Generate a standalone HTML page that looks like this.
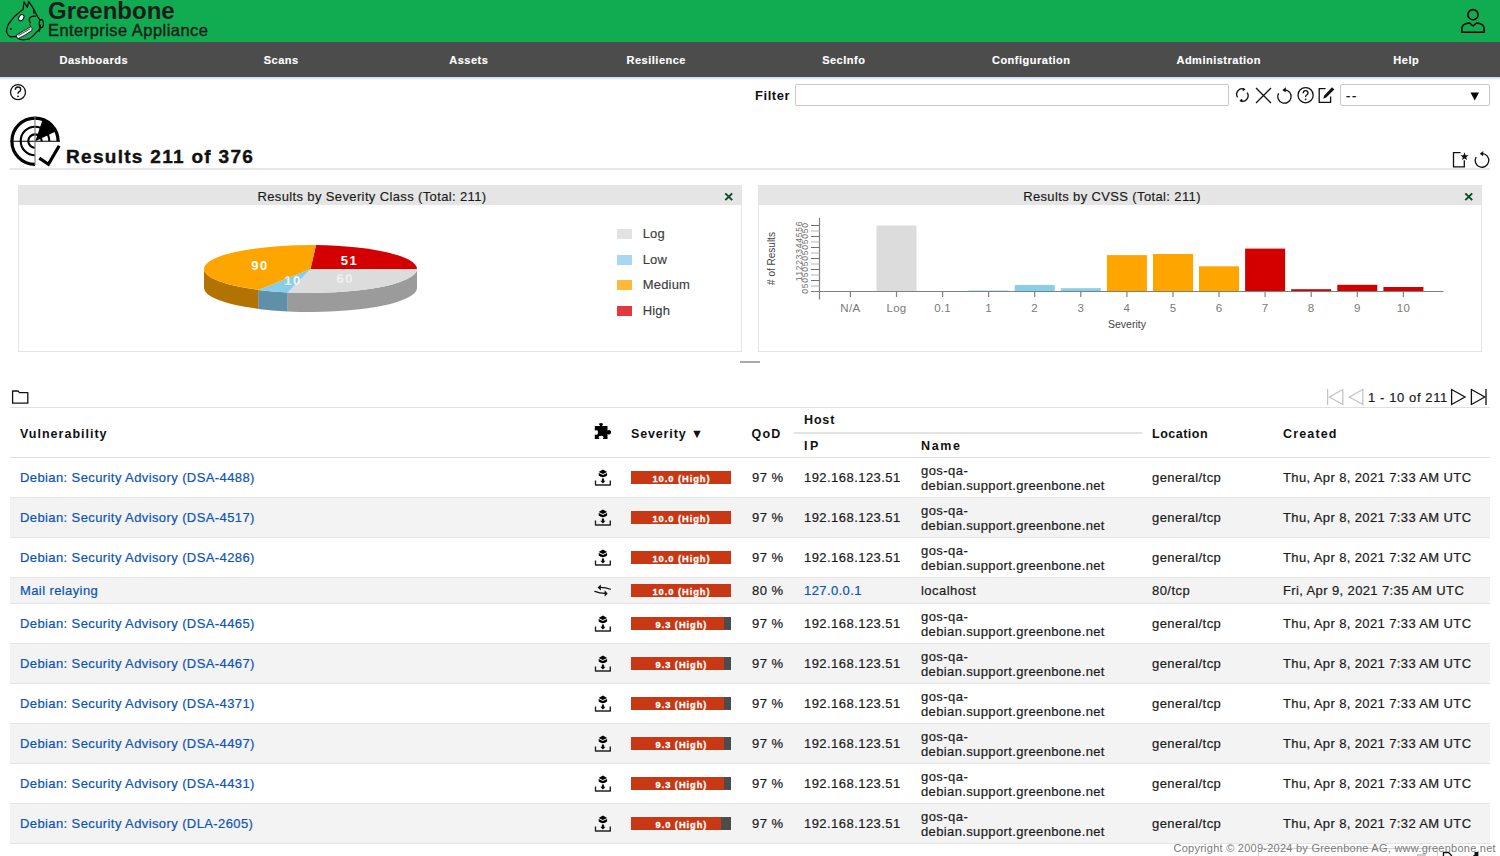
<!DOCTYPE html>
<html><head><meta charset="utf-8">
<style>
*{box-sizing:border-box;margin:0;padding:0}
html,body{width:1500px;height:856px;overflow:hidden;background:#fff;font-family:"Liberation Sans",sans-serif;color:#000}
.a{position:absolute;white-space:nowrap}
svg{position:absolute;overflow:visible}
#hdr{position:absolute;left:0;top:0;width:1500px;height:42px;background:#11ab51}
#nav{position:absolute;left:0;top:42px;width:1500px;height:35px;background:#4c4c4c}
#nav div{position:absolute;top:1px;width:187.5px;height:35px;line-height:35px;text-align:center;color:#fff;font-weight:bold;font-size:11px;letter-spacing:0.5px;-webkit-text-stroke:0.15px #fff}
#blue{position:absolute;left:0;top:77px;width:1500px;height:3px;background:linear-gradient(#cbdaf3,#d6e3f8 40%,#fff)}
.t{font-size:13px;line-height:16px;color:#1a1a1a;letter-spacing:0.45px;-webkit-text-stroke:0.2px currentColor}
.lnk{color:#0a53b7;letter-spacing:0.4px}
.th{font-size:12.5px;line-height:16px;font-weight:bold;color:#111;letter-spacing:0.5px}
.row{position:absolute;left:10px;width:1480px;border-bottom:1px solid #e5e5e5}
.ic{position:absolute}
.sev{position:absolute;left:631px;width:100px;height:13px;background:#4c4c4c}
.sevf{position:absolute;left:0;top:0;height:13px;background:#c83814}
.sev span{position:absolute;left:0.5px;top:1.6px;width:100px;text-align:center;color:#fff;font-weight:bold;font-size:9.3px;line-height:13px;letter-spacing:0.95px;-webkit-text-stroke:0.3px #fff}
.panel{position:absolute;top:185px;width:724px;height:167px;border:1px solid #e5e5e5;border-top:none}
.ptitle{position:absolute;left:-1px;top:0;width:724px;height:20px;background:#e5e5e5}
.ptitle div{position:absolute;left:0;top:0.7px;width:708px;text-align:center;font-size:13px;line-height:21px;color:#1a1a1a;letter-spacing:0.37px;-webkit-text-stroke:0.15px currentColor}
.xclose{position:absolute;top:4px;font-size:14px;font-weight:bold;color:#0b4a28}
.leg{position:absolute;left:598.3px;width:15px;height:10px}
.legt{position:absolute;left:623.7px;font-size:13px;line-height:16px;color:#3c3c3c;letter-spacing:0.2px;-webkit-text-stroke:0.15px currentColor}
.xl{font-family:"Liberation Sans",sans-serif;font-size:11.5px;fill:#7a7a7a;letter-spacing:0.3px}
.yl{font-family:"Liberation Sans",sans-serif;font-size:8.5px;fill:#6e6e6e}
.pl{font-family:"Liberation Sans",sans-serif;font-size:13px;font-weight:bold;letter-spacing:1.6px}
</style></head><body>
<div id="hdr">
  <svg width="48" height="42" viewBox="0 0 48 42" style="left:0;top:0">
    <g fill="none" stroke="#0d0d0d" stroke-width="1.25" stroke-linejoin="round" stroke-linecap="round">
      <path d="M23.1 9.3 L24 1.9 L27.4 7.4 L28.6 1.3 L32 6.4 L34 9.6 L37.3 16.2 L39.2 19 M40.6 27.6 Q39 30 37.3 31.4 Q33 36.5 29.4 38.8 L23 40 L18.7 38.8 L16.2 36.4 L10.8 36.8 Q7.2 35.5 6.4 30.6 Q7.3 26 8.8 23.6 L14.7 16.2 L23.1 9.3"/>
      <path d="M35.4 16.2 Q31 15.6 29.3 18.6 Q29 21 30.4 22.8"/>
      <path d="M33.6 10 L34 13.4"/>
      <ellipse cx="41.3" cy="23.6" rx="2.1" ry="4.1"/>
      <path d="M39.3 31.2 Q40.6 28.5 40.3 25"/>
    </g>
    <path d="M16.5 35.2 Q23.5 31 30.6 26.8 Q32.8 27.8 31.8 30.6 Q25.5 35.2 18.6 38.4 Q15.8 38 16.5 35.2Z" fill="#fff" stroke="#0d0d0d" stroke-width="0.9"/>
    <path d="M18.5 35.6 Q24.5 32 30.2 28.8" stroke="#0d0d0d" stroke-width="0.8" fill="none"/>
    <path d="M29.5 24.2 Q31 26 30.6 26.8" stroke="#0d0d0d" stroke-width="1" fill="none"/>
    <ellipse cx="21.3" cy="17.7" rx="2.3" ry="3.3" transform="rotate(32 21.3 17.7)" fill="#fff" stroke="#0d0d0d" stroke-width="1"/>
    <circle cx="10.8" cy="29" r="1.05" fill="#0d0d0d"/>
    <path d="M39.2 19 L41 20.2" stroke="#0d0d0d" stroke-width="1.2"/>
  </svg>
  <div class="a" style="left:48px;top:-2.6px;font-size:24px;font-weight:bold;color:#1d1d1b">Greenbone</div>
  <div class="a" style="left:48px;top:21.4px;font-size:16.5px;color:#1d1d1b;letter-spacing:0.45px;-webkit-text-stroke:0.4px #1d1d1b">Enterprise Appliance</div>
  <svg width="30" height="30" viewBox="0 0 30 30" style="left:1458px;top:6px">
    <circle cx="15" cy="8.7" r="5.1" fill="none" stroke="#000" stroke-width="1.6"/>
    <path d="M3.8 26.2 V22 Q4.5 17.5 11.5 17 L15 20 L18.5 17 Q25.5 17.5 26.2 22 V26.2 Z" fill="none" stroke="#000" stroke-width="1.6" stroke-linejoin="round"/>
  </svg>
</div>
<div id="nav">
  <div style="left:0">Dashboards</div>
  <div style="left:187.5px">Scans</div>
  <div style="left:375px">Assets</div>
  <div style="left:562.5px">Resilience</div>
  <div style="left:750px">SecInfo</div>
  <div style="left:937.5px">Configuration</div>
  <div style="left:1125px">Administration</div>
  <div style="left:1312.5px">Help</div>
</div>
<div id="blue"></div>

<!-- help icon -->
<svg width="20" height="20" viewBox="0 0 20 20" style="left:8px;top:82px">
  <circle cx="10" cy="10.2" r="7.5" fill="none" stroke="#111" stroke-width="1.3"/>
  <path d="M7.3 7.8 Q7.3 5 10 5 Q12.7 5 12.7 7.6 Q12.7 9.2 10.8 10 Q10 10.4 10 11.8" fill="none" stroke="#111" stroke-width="1.4"/>
  <circle cx="10" cy="14.3" r="0.9" fill="#111"/>
</svg>

<!-- filter -->
<div class="a" style="left:755px;top:87.6px;font-size:13px;font-weight:bold;color:#111;letter-spacing:0.55px">Filter</div>
<div class="a" style="left:795px;top:84px;width:434px;height:22px;border:1px solid #c8c8c8;border-radius:2px"></div>
<svg width="120" height="22" viewBox="0 0 120 22" style="left:1232px;top:84px">
  <g fill="none" stroke="#111" stroke-width="1.3">
    <path d="M5.6 13.3 A5.5 5.5 0 0 1 12.3 5.2"/>
    <path d="M15.2 8.7 A5.5 5.5 0 0 1 8.5 16.8"/>
    <path d="M24 4 L39 19 M39 4 L24 19"/>
    <path d="M52.8 5.8 A6.7 6.7 0 1 1 46.6 9.2"/>
    <circle cx="73.6" cy="11.2" r="7.6"/>
    <path d="M71.2 9.3 Q71.2 6.7 73.6 6.7 Q76 6.7 76 9 Q76 10.5 74.3 11.2 Q73.6 11.6 73.6 13"/>
    <path d="M93.5 4.6 H87.2 V18.4 H98.6 V12.4"/>
  </g>
  <path d="M10.5 3.8 L13.6 5.4 L10.8 7.2Z M10.6 18.3 L7.3 16.6 L10.2 14.8Z" fill="#111"/>
  <path d="M50.3 5.9 L53.9 3.2 L53.7 8.6Z" fill="#111"/>
  <circle cx="73.6" cy="15.3" r="0.9" fill="#111"/>
  <path d="M100 3.2 L102.3 5.5 L94.2 13.6 L91.4 14.7 L92 11.7Z" fill="#111"/>
</svg>
<div class="a" style="left:1340px;top:84px;width:150px;height:22px;border:1px solid #c8c8c8;border-radius:2px"></div>
<div class="a" style="left:1346px;top:88px;font-size:13px;line-height:16px;color:#111;letter-spacing:1.6px;-webkit-text-stroke:0.3px #111">--</div>
<svg width="10" height="9" viewBox="0 0 10 9" style="left:1470px;top:91.5px"><path d="M0.5 0.5 H9 L4.8 8.5Z" fill="#000"/></svg>

<!-- title -->
<svg width="56" height="56" viewBox="0 0 56 56" style="left:7px;top:113px">
  <g fill="none" stroke="#000">
    <path d="M28 51.3 A23.1 23.1 0 1 1 51.1 28.2" stroke-width="3.2"/>
    <path d="M28 42.3 A14.3 14.3 0 1 1 42.3 28.2" stroke-width="2.1"/>
    <path d="M28 34.8 A6.7 6.7 0 1 1 34.7 28.2" stroke-width="2.1"/>
    <path d="M3.5 28.2 H53" stroke-width="1.1"/>
    <path d="M28 3.5 V52" stroke-width="1.1" stroke="#777"/>
    <path d="M32.3 45.2 L41.4 51.3 L52.2 32.8" stroke-width="3.2" stroke-linejoin="miter"/>
  </g>
  <path d="M28.3 28.2 L35.8 6.1 A23.5 23.5 0 0 1 49.2 18.2 Z" fill="#000"/>
</svg>
<div class="a" style="left:66px;top:145.5px;font-size:19px;line-height:22px;font-weight:bold;color:#111;letter-spacing:1.3px;-webkit-text-stroke:0.4px #111">Results 211 of 376</div>
<div class="a" style="left:10px;top:168px;width:1480px;height:2px;background:#e6e6e6"></div>
<svg width="40" height="20" viewBox="0 0 40 20" style="left:1451px;top:149px">
  <path d="M9.6 3.6 H2.5 V17.9 H13.3 V11.2" fill="none" stroke="#111" stroke-width="1.3"/>
  <path d="M13.50 3.30 L14.56 6.14 L17.59 6.27 L15.21 8.16 L16.03 11.08 L13.50 9.40 L10.97 11.08 L11.79 8.16 L9.41 6.27 L12.44 6.14Z" fill="#111"/>
  <path d="M31.2 4.6 A6.8 6.8 0 1 1 25.1 8" fill="none" stroke="#111" stroke-width="1.3"/>
  <path d="M28.7 4.65 L32.3 1.95 L32.1 7.35Z" fill="#111"/>
</svg>

<!-- panels -->
<div class="panel" style="left:18px">
  <div class="ptitle"><div>Results by Severity Class (Total: 211)</div></div>
  <svg width="10" height="10" viewBox="0 0 10 10" style="left:705px;top:7px"><path d="M1.3 1.3 L8.2 8.2 M8.2 1.3 L1.3 8.2" stroke="#0b4a28" stroke-width="1.9"/></svg>
  <div class="leg" style="top:43.8px;background:#e2e2e2"></div><div class="legt" style="top:41px">Log</div>
  <div class="leg" style="top:70px;background:#a6d9ef"></div><div class="legt" style="top:67px">Low</div>
  <div class="leg" style="top:95px;background:#ffb83a"></div><div class="legt" style="top:92px">Medium</div>
  <div class="leg" style="top:121px;background:#e0393e"></div><div class="legt" style="top:118px">High</div>
</div>
<div class="panel" style="left:758px">
  <div class="ptitle"><div>Results by CVSS (Total: 211)</div></div>
  <svg width="10" height="10" viewBox="0 0 10 10" style="left:705px;top:7px"><path d="M1.3 1.3 L8.2 8.2 M8.2 1.3 L1.3 8.2" stroke="#0b4a28" stroke-width="1.9"/></svg>
</div>
<svg width="1500" height="400" viewBox="0 0 1500 400" style="left:0;top:0">
<path d="M417.00 269.00 A106.5 24.0 0 0 1 287.69 292.44 L287.69 311.44 A106.5 24.0 0 0 0 417.00 288.00 Z" fill="#9b9b9b"/>
<path d="M287.69 292.44 A106.5 24.0 0 0 1 258.17 289.90 L258.17 308.90 A106.5 24.0 0 0 0 287.69 311.44 Z" fill="#6090a8"/>
<path d="M258.17 289.90 A106.5 24.0 0 0 1 204.00 269.00 L204.00 288.00 A106.5 24.0 0 0 0 258.17 308.90 Z" fill="#b37300"/>
<path d="M310.5 269.0 L316.05 245.03 A106.5 24.0 0 0 1 417.00 269.00 Z" fill="#d40000"/>
<path d="M310.5 269.0 L417.00 269.00 A106.5 24.0 0 0 1 287.69 292.44 Z" fill="#dcdcdc"/>
<path d="M310.5 269.0 L287.69 292.44 A106.5 24.0 0 0 1 258.17 289.90 Z" fill="#87ceeb"/>
<path d="M310.5 269.0 L258.17 289.90 A106.5 24.0 0 0 1 316.05 245.03 Z" fill="#ffa500"/>
  <text x="260" y="270" text-anchor="middle" class="pl" fill="#fff">90</text>
  <text x="349.5" y="265" text-anchor="middle" class="pl" fill="#fff">51</text>
  <text x="293" y="285" text-anchor="middle" class="pl" fill="#f4f4f4">10</text>
  <text x="345.3" y="283" text-anchor="middle" class="pl" fill="#f0f0f0">60</text>
<rect x="876.5" y="225.5" width="40" height="66.0" fill="#dcdcdc"/>
<rect x="968.6" y="290.5" width="40" height="1.0" fill="#87ceeb"/>
<rect x="1014.7" y="285.0" width="40" height="6.5" fill="#87ceeb"/>
<rect x="1060.8" y="288.2" width="40" height="3.3" fill="#87ceeb"/>
<rect x="1106.9" y="255.1" width="40" height="36.4" fill="#ffa500"/>
<rect x="1153.0" y="254.0" width="40" height="37.5" fill="#ffa500"/>
<rect x="1199.0" y="266.3" width="40" height="25.2" fill="#ffa500"/>
<rect x="1245.1" y="248.6" width="40" height="42.9" fill="#d40000"/>
<rect x="1291.2" y="289.2" width="40" height="2.3" fill="#d40000"/>
<rect x="1337.3" y="284.8" width="40" height="6.7" fill="#d40000"/>
<rect x="1383.4" y="287.0" width="40" height="4.5" fill="#d40000"/>
<path d="M819.5 218 V299.5 M811 291.5 H1443.5" stroke="#808080" stroke-width="1.2" fill="none"/>
<path d="M811 280.5 H819.5 M811 269.5 H819.5 M811 258.5 H819.5 M811 247.5 H819.5 M811 236.5 H819.5 M811 225.5 H819.5 " stroke="#707070" stroke-width="1" fill="none"/>
<path d="M811 286.0 H819.5 M811 275.0 H819.5 M811 264.0 H819.5 M811 253.0 H819.5 M811 242.0 H819.5 M811 231.0 H819.5 " stroke="#b4b4b4" stroke-width="1" fill="none"/>
<path d="M850.4 291.5 V297 M896.5 291.5 V297 M942.6 291.5 V297 M988.6 291.5 V297 M1034.7 291.5 V297 M1080.8 291.5 V297 M1126.9 291.5 V297 M1173.0 291.5 V297 M1219.0 291.5 V297 M1265.1 291.5 V297 M1311.2 291.5 V297 M1357.3 291.5 V297 M1403.4 291.5 V297 " stroke="#808080" stroke-width="1.2" fill="none"/>
<text x="850.4" y="312" text-anchor="middle" class="xl">N/A</text>
<text x="896.5" y="312" text-anchor="middle" class="xl">Log</text>
<text x="942.6" y="312" text-anchor="middle" class="xl">0.1</text>
<text x="988.6" y="312" text-anchor="middle" class="xl">1</text>
<text x="1034.7" y="312" text-anchor="middle" class="xl">2</text>
<text x="1080.8" y="312" text-anchor="middle" class="xl">3</text>
<text x="1126.9" y="312" text-anchor="middle" class="xl">4</text>
<text x="1173.0" y="312" text-anchor="middle" class="xl">5</text>
<text x="1219.0" y="312" text-anchor="middle" class="xl">6</text>
<text x="1265.1" y="312" text-anchor="middle" class="xl">7</text>
<text x="1311.2" y="312" text-anchor="middle" class="xl">8</text>
<text x="1357.3" y="312" text-anchor="middle" class="xl">9</text>
<text x="1403.4" y="312" text-anchor="middle" class="xl">10</text>
<text transform="translate(808.3 291.5) rotate(-90)" text-anchor="middle" class="yl">0</text>
<text transform="translate(808.3 286.0) rotate(-90)" text-anchor="middle" class="yl">5</text>
<text transform="translate(808.3 280.5) rotate(-90)" text-anchor="middle" class="yl">0</text>
<text transform="translate(802.3 279.0) rotate(-90)" text-anchor="middle" class="yl">1</text>
<text transform="translate(808.3 275.0) rotate(-90)" text-anchor="middle" class="yl">5</text>
<text transform="translate(802.3 273.5) rotate(-90)" text-anchor="middle" class="yl">1</text>
<text transform="translate(808.3 269.5) rotate(-90)" text-anchor="middle" class="yl">0</text>
<text transform="translate(802.3 268.0) rotate(-90)" text-anchor="middle" class="yl">2</text>
<text transform="translate(808.3 264.0) rotate(-90)" text-anchor="middle" class="yl">5</text>
<text transform="translate(802.3 262.5) rotate(-90)" text-anchor="middle" class="yl">2</text>
<text transform="translate(808.3 258.5) rotate(-90)" text-anchor="middle" class="yl">0</text>
<text transform="translate(802.3 257.0) rotate(-90)" text-anchor="middle" class="yl">3</text>
<text transform="translate(808.3 253.0) rotate(-90)" text-anchor="middle" class="yl">5</text>
<text transform="translate(802.3 251.5) rotate(-90)" text-anchor="middle" class="yl">3</text>
<text transform="translate(808.3 247.5) rotate(-90)" text-anchor="middle" class="yl">0</text>
<text transform="translate(802.3 246.0) rotate(-90)" text-anchor="middle" class="yl">4</text>
<text transform="translate(808.3 242.0) rotate(-90)" text-anchor="middle" class="yl">5</text>
<text transform="translate(802.3 240.5) rotate(-90)" text-anchor="middle" class="yl">4</text>
<text transform="translate(808.3 236.5) rotate(-90)" text-anchor="middle" class="yl">0</text>
<text transform="translate(802.3 235.0) rotate(-90)" text-anchor="middle" class="yl">5</text>
<text transform="translate(808.3 231.0) rotate(-90)" text-anchor="middle" class="yl">5</text>
<text transform="translate(802.3 229.5) rotate(-90)" text-anchor="middle" class="yl">5</text>
<text transform="translate(808.3 225.5) rotate(-90)" text-anchor="middle" class="yl">0</text>
<text transform="translate(802.3 224.0) rotate(-90)" text-anchor="middle" class="yl">6</text>
  <text x="0" y="0" transform="translate(775 258.5) rotate(-90)" text-anchor="middle" style="font-family:'Liberation Sans';font-size:10px;fill:#444">
# of Results</text>
  <text x="1127" y="328" text-anchor="middle" style="font-family:'Liberation Sans';font-size:10.5px;fill:#444">Severity</text>
</svg>
<div class="a" style="left:740px;top:361px;width:20px;height:2px;background:#aaa"></div>

<!-- table toolbar -->
<svg width="20" height="16" viewBox="0 0 20 16" style="left:10px;top:389px">
  <path d="M2.6 2 H8 L9.5 3.6 H17.8 V14.2 H2.6 Z" fill="none" stroke="#111" stroke-width="1.3" stroke-linejoin="round"/>
</svg>
<svg width="170" height="20" viewBox="0 0 170 20" style="left:1322px;top:387px">
  <g fill="none" stroke-width="1.3">
    <path d="M5.6 2 V18" stroke="#c4c4c4"/>
    <path d="M20.8 2.5 L7.4 10 L20.8 17.5Z" stroke="#c4c4c4"/>
    <path d="M40.8 2.5 L27.4 10 L40.8 17.5Z" stroke="#c4c4c4"/>
    <path d="M129.6 2.5 L143 10 L129.6 17.5Z" stroke="#111"/>
    <path d="M149.4 2.5 L162.8 10 L149.4 17.5Z" stroke="#111"/>
    <path d="M164 2 V18" stroke="#111"/>
  </g>
</svg>
<div class="a" style="left:1368px;top:390px;font-size:13px;line-height:16px;color:#1a1a1a;letter-spacing:0.6px;-webkit-text-stroke:0.2px currentColor">1 - 10 of 211</div>
<div class="a" style="left:10px;top:407px;width:1480px;height:1px;background:#e0e0e0"></div>

<!-- table header -->
<div class="a" style="left:10px;top:457px;width:1480px;height:1px;background:#e0e0e0"></div>
<div class="a th" style="left:20px;top:426px;letter-spacing:1.0px">Vulnerability</div>
<svg width="18" height="18" viewBox="0 0 18 18" style="left:593px;top:422px">
  <path d="M1.8 4 H7 V3.4 Q5.6 2.8 6.2 1.5 Q8 0.7 9.8 1.5 Q10.4 2.8 9.2 3.4 V4 H14.5 V8.6 Q15.2 8 16.4 7.9 Q18.1 8.3 18.1 10.3 Q18 12.3 16.4 12.6 Q15.2 12.6 14.5 12 V17 H9.8 V16.7 Q11 16 10.2 14.3 Q8 13.2 6 14.3 Q5.2 16 6.4 16.7 V17 H1.8 V12.6 Q3.5 13.2 4.6 12.3 Q5.4 10.4 4.6 8.6 Q3.4 7.9 1.8 8.5 Z" fill="#000"/>
</svg>
<div class="a th" style="left:631px;top:425.7px;letter-spacing:0.85px">Severity &#9660;</div>
<div class="a th" style="left:751.5px;top:425.7px;letter-spacing:1.2px">QoD</div>
<div class="a th" style="left:804px;top:412.4px;letter-spacing:0.85px">Host</div>
<div class="a" style="left:794px;top:432px;width:348px;height:1.5px;background:#e3e3e3"></div>
<div class="a th" style="left:804px;top:438px;letter-spacing:2.5px">IP</div>
<div class="a th" style="left:921px;top:438px;letter-spacing:1.6px">Name</div>
<div class="a th" style="left:1152px;top:425.7px">Location</div>
<div class="a th" style="left:1283px;top:425.7px;letter-spacing:1.15px">Created</div>

<div class="row" style="top:458px;height:40px;background:#fff"></div>
<div class="a t lnk" style="left:20px;top:470.3px">Debian: Security Advisory (DSA-4488)</div>
<svg class="ic" width="20" height="18" viewBox="0 0 20 18" style="left:593px;top:469px"><path d="M9.9 0.5 L14.1 2.9 L9.9 5 L5.7 2.9Z" fill="#000"/><path d="M5.7 4 L9.9 6.1 L14.1 4 V6.6 Q9.9 9.8 5.7 6.6Z" fill="#000"/><path d="M8.9 9.4 H10.9 V11.8 H12.5 L9.9 14.6 L7.3 11.8 H8.9Z" fill="#000"/><path d="M2.5 11.5 V16 H17.3 V11.5" fill="none" stroke="#222" stroke-width="1.4" stroke-linejoin="round"/></svg>
<div class="sev" style="top:471.0px"><div class="sevf" style="width:100px"></div><span>10.0 (High)</span></div>
<div class="a t" style="left:752px;top:470.3px">97 %</div>
<div class="a t" style="left:804px;top:470.3px">192.168.123.51</div>
<div class="a t" style="left:921px;top:463.0px">gos-qa-</div>
<div class="a t" style="left:921px;top:478.4px;letter-spacing:0.37px">debian.support.greenbone.net</div>
<div class="a t" style="left:1152px;top:470.3px">general/tcp</div>
<div class="a t" style="left:1283px;top:470.3px;letter-spacing:0.38px">Thu, Apr 8, 2021 7:33 AM UTC</div>
<div class="row" style="top:498px;height:40px;background:#f3f3f3"></div>
<div class="a t lnk" style="left:20px;top:510.3px">Debian: Security Advisory (DSA-4517)</div>
<svg class="ic" width="20" height="18" viewBox="0 0 20 18" style="left:593px;top:509px"><path d="M9.9 0.5 L14.1 2.9 L9.9 5 L5.7 2.9Z" fill="#000"/><path d="M5.7 4 L9.9 6.1 L14.1 4 V6.6 Q9.9 9.8 5.7 6.6Z" fill="#000"/><path d="M8.9 9.4 H10.9 V11.8 H12.5 L9.9 14.6 L7.3 11.8 H8.9Z" fill="#000"/><path d="M2.5 11.5 V16 H17.3 V11.5" fill="none" stroke="#222" stroke-width="1.4" stroke-linejoin="round"/></svg>
<div class="sev" style="top:511.0px"><div class="sevf" style="width:100px"></div><span>10.0 (High)</span></div>
<div class="a t" style="left:752px;top:510.3px">97 %</div>
<div class="a t" style="left:804px;top:510.3px">192.168.123.51</div>
<div class="a t" style="left:921px;top:503.0px">gos-qa-</div>
<div class="a t" style="left:921px;top:518.4px;letter-spacing:0.37px">debian.support.greenbone.net</div>
<div class="a t" style="left:1152px;top:510.3px">general/tcp</div>
<div class="a t" style="left:1283px;top:510.3px;letter-spacing:0.38px">Thu, Apr 8, 2021 7:33 AM UTC</div>
<div class="row" style="top:538px;height:40px;background:#fff"></div>
<div class="a t lnk" style="left:20px;top:550.3px">Debian: Security Advisory (DSA-4286)</div>
<svg class="ic" width="20" height="18" viewBox="0 0 20 18" style="left:593px;top:549px"><path d="M9.9 0.5 L14.1 2.9 L9.9 5 L5.7 2.9Z" fill="#000"/><path d="M5.7 4 L9.9 6.1 L14.1 4 V6.6 Q9.9 9.8 5.7 6.6Z" fill="#000"/><path d="M8.9 9.4 H10.9 V11.8 H12.5 L9.9 14.6 L7.3 11.8 H8.9Z" fill="#000"/><path d="M2.5 11.5 V16 H17.3 V11.5" fill="none" stroke="#222" stroke-width="1.4" stroke-linejoin="round"/></svg>
<div class="sev" style="top:551.0px"><div class="sevf" style="width:100px"></div><span>10.0 (High)</span></div>
<div class="a t" style="left:752px;top:550.3px">97 %</div>
<div class="a t" style="left:804px;top:550.3px">192.168.123.51</div>
<div class="a t" style="left:921px;top:543.0px">gos-qa-</div>
<div class="a t" style="left:921px;top:558.4px;letter-spacing:0.37px">debian.support.greenbone.net</div>
<div class="a t" style="left:1152px;top:550.3px">general/tcp</div>
<div class="a t" style="left:1283px;top:550.3px;letter-spacing:0.38px">Thu, Apr 8, 2021 7:32 AM UTC</div>
<div class="row" style="top:578px;height:26px;background:#f3f3f3"></div>
<div class="a t lnk" style="left:20px;top:583.3px">Mail relaying</div>
<svg class="ic" width="20" height="16" viewBox="0 0 20 16" style="left:593px;top:583px"><path d="M6.5 4.5 Q13 4.4 17.4 6.3" fill="none" stroke="#111" stroke-width="1.25" stroke-linecap="round"/><path d="M4.6 4.5 L7.8 1.4 L7.8 7.6Z" fill="#111"/><path d="M1.9 8.4 Q6 10.4 12.5 10.4" fill="none" stroke="#111" stroke-width="1.25" stroke-linecap="round"/><path d="M14.7 10.4 L11.6 7.3 L11.6 13.5Z" fill="#111"/></svg>
<div class="sev" style="top:584.0px"><div class="sevf" style="width:100px"></div><span>10.0 (High)</span></div>
<div class="a t" style="left:752px;top:583.3px">80 %</div>
<div class="a t lnk" style="left:804px;top:583.3px">127.0.0.1</div>
<div class="a t" style="left:921px;top:583.3px">localhost</div>
<div class="a t" style="left:1152px;top:583.3px">80/tcp</div>
<div class="a t" style="left:1283px;top:583.3px;letter-spacing:0.38px">Fri, Apr 9, 2021 7:35 AM UTC</div>
<div class="row" style="top:604px;height:40px;background:#fff"></div>
<div class="a t lnk" style="left:20px;top:616.3px">Debian: Security Advisory (DSA-4465)</div>
<svg class="ic" width="20" height="18" viewBox="0 0 20 18" style="left:593px;top:615px"><path d="M9.9 0.5 L14.1 2.9 L9.9 5 L5.7 2.9Z" fill="#000"/><path d="M5.7 4 L9.9 6.1 L14.1 4 V6.6 Q9.9 9.8 5.7 6.6Z" fill="#000"/><path d="M8.9 9.4 H10.9 V11.8 H12.5 L9.9 14.6 L7.3 11.8 H8.9Z" fill="#000"/><path d="M2.5 11.5 V16 H17.3 V11.5" fill="none" stroke="#222" stroke-width="1.4" stroke-linejoin="round"/></svg>
<div class="sev" style="top:617.0px"><div class="sevf" style="width:93px"></div><span>9.3 (High)</span></div>
<div class="a t" style="left:752px;top:616.3px">97 %</div>
<div class="a t" style="left:804px;top:616.3px">192.168.123.51</div>
<div class="a t" style="left:921px;top:609.0px">gos-qa-</div>
<div class="a t" style="left:921px;top:624.4px;letter-spacing:0.37px">debian.support.greenbone.net</div>
<div class="a t" style="left:1152px;top:616.3px">general/tcp</div>
<div class="a t" style="left:1283px;top:616.3px;letter-spacing:0.38px">Thu, Apr 8, 2021 7:33 AM UTC</div>
<div class="row" style="top:644px;height:40px;background:#f3f3f3"></div>
<div class="a t lnk" style="left:20px;top:656.3px">Debian: Security Advisory (DSA-4467)</div>
<svg class="ic" width="20" height="18" viewBox="0 0 20 18" style="left:593px;top:655px"><path d="M9.9 0.5 L14.1 2.9 L9.9 5 L5.7 2.9Z" fill="#000"/><path d="M5.7 4 L9.9 6.1 L14.1 4 V6.6 Q9.9 9.8 5.7 6.6Z" fill="#000"/><path d="M8.9 9.4 H10.9 V11.8 H12.5 L9.9 14.6 L7.3 11.8 H8.9Z" fill="#000"/><path d="M2.5 11.5 V16 H17.3 V11.5" fill="none" stroke="#222" stroke-width="1.4" stroke-linejoin="round"/></svg>
<div class="sev" style="top:657.0px"><div class="sevf" style="width:93px"></div><span>9.3 (High)</span></div>
<div class="a t" style="left:752px;top:656.3px">97 %</div>
<div class="a t" style="left:804px;top:656.3px">192.168.123.51</div>
<div class="a t" style="left:921px;top:649.0px">gos-qa-</div>
<div class="a t" style="left:921px;top:664.4px;letter-spacing:0.37px">debian.support.greenbone.net</div>
<div class="a t" style="left:1152px;top:656.3px">general/tcp</div>
<div class="a t" style="left:1283px;top:656.3px;letter-spacing:0.38px">Thu, Apr 8, 2021 7:33 AM UTC</div>
<div class="row" style="top:684px;height:40px;background:#fff"></div>
<div class="a t lnk" style="left:20px;top:696.3px">Debian: Security Advisory (DSA-4371)</div>
<svg class="ic" width="20" height="18" viewBox="0 0 20 18" style="left:593px;top:695px"><path d="M9.9 0.5 L14.1 2.9 L9.9 5 L5.7 2.9Z" fill="#000"/><path d="M5.7 4 L9.9 6.1 L14.1 4 V6.6 Q9.9 9.8 5.7 6.6Z" fill="#000"/><path d="M8.9 9.4 H10.9 V11.8 H12.5 L9.9 14.6 L7.3 11.8 H8.9Z" fill="#000"/><path d="M2.5 11.5 V16 H17.3 V11.5" fill="none" stroke="#222" stroke-width="1.4" stroke-linejoin="round"/></svg>
<div class="sev" style="top:697.0px"><div class="sevf" style="width:93px"></div><span>9.3 (High)</span></div>
<div class="a t" style="left:752px;top:696.3px">97 %</div>
<div class="a t" style="left:804px;top:696.3px">192.168.123.51</div>
<div class="a t" style="left:921px;top:689.0px">gos-qa-</div>
<div class="a t" style="left:921px;top:704.4px;letter-spacing:0.37px">debian.support.greenbone.net</div>
<div class="a t" style="left:1152px;top:696.3px">general/tcp</div>
<div class="a t" style="left:1283px;top:696.3px;letter-spacing:0.38px">Thu, Apr 8, 2021 7:33 AM UTC</div>
<div class="row" style="top:724px;height:40px;background:#f3f3f3"></div>
<div class="a t lnk" style="left:20px;top:736.3px">Debian: Security Advisory (DSA-4497)</div>
<svg class="ic" width="20" height="18" viewBox="0 0 20 18" style="left:593px;top:735px"><path d="M9.9 0.5 L14.1 2.9 L9.9 5 L5.7 2.9Z" fill="#000"/><path d="M5.7 4 L9.9 6.1 L14.1 4 V6.6 Q9.9 9.8 5.7 6.6Z" fill="#000"/><path d="M8.9 9.4 H10.9 V11.8 H12.5 L9.9 14.6 L7.3 11.8 H8.9Z" fill="#000"/><path d="M2.5 11.5 V16 H17.3 V11.5" fill="none" stroke="#222" stroke-width="1.4" stroke-linejoin="round"/></svg>
<div class="sev" style="top:737.0px"><div class="sevf" style="width:93px"></div><span>9.3 (High)</span></div>
<div class="a t" style="left:752px;top:736.3px">97 %</div>
<div class="a t" style="left:804px;top:736.3px">192.168.123.51</div>
<div class="a t" style="left:921px;top:729.0px">gos-qa-</div>
<div class="a t" style="left:921px;top:744.4px;letter-spacing:0.37px">debian.support.greenbone.net</div>
<div class="a t" style="left:1152px;top:736.3px">general/tcp</div>
<div class="a t" style="left:1283px;top:736.3px;letter-spacing:0.38px">Thu, Apr 8, 2021 7:33 AM UTC</div>
<div class="row" style="top:764px;height:40px;background:#fff"></div>
<div class="a t lnk" style="left:20px;top:776.3px">Debian: Security Advisory (DSA-4431)</div>
<svg class="ic" width="20" height="18" viewBox="0 0 20 18" style="left:593px;top:775px"><path d="M9.9 0.5 L14.1 2.9 L9.9 5 L5.7 2.9Z" fill="#000"/><path d="M5.7 4 L9.9 6.1 L14.1 4 V6.6 Q9.9 9.8 5.7 6.6Z" fill="#000"/><path d="M8.9 9.4 H10.9 V11.8 H12.5 L9.9 14.6 L7.3 11.8 H8.9Z" fill="#000"/><path d="M2.5 11.5 V16 H17.3 V11.5" fill="none" stroke="#222" stroke-width="1.4" stroke-linejoin="round"/></svg>
<div class="sev" style="top:777.0px"><div class="sevf" style="width:93px"></div><span>9.3 (High)</span></div>
<div class="a t" style="left:752px;top:776.3px">97 %</div>
<div class="a t" style="left:804px;top:776.3px">192.168.123.51</div>
<div class="a t" style="left:921px;top:769.0px">gos-qa-</div>
<div class="a t" style="left:921px;top:784.4px;letter-spacing:0.37px">debian.support.greenbone.net</div>
<div class="a t" style="left:1152px;top:776.3px">general/tcp</div>
<div class="a t" style="left:1283px;top:776.3px;letter-spacing:0.38px">Thu, Apr 8, 2021 7:33 AM UTC</div>
<div class="row" style="top:804px;height:40px;background:#f3f3f3"></div>
<div class="a t lnk" style="left:20px;top:816.3px">Debian: Security Advisory (DLA-2605)</div>
<svg class="ic" width="20" height="18" viewBox="0 0 20 18" style="left:593px;top:815px"><path d="M9.9 0.5 L14.1 2.9 L9.9 5 L5.7 2.9Z" fill="#000"/><path d="M5.7 4 L9.9 6.1 L14.1 4 V6.6 Q9.9 9.8 5.7 6.6Z" fill="#000"/><path d="M8.9 9.4 H10.9 V11.8 H12.5 L9.9 14.6 L7.3 11.8 H8.9Z" fill="#000"/><path d="M2.5 11.5 V16 H17.3 V11.5" fill="none" stroke="#222" stroke-width="1.4" stroke-linejoin="round"/></svg>
<div class="sev" style="top:817.0px"><div class="sevf" style="width:90px"></div><span>9.0 (High)</span></div>
<div class="a t" style="left:752px;top:816.3px">97 %</div>
<div class="a t" style="left:804px;top:816.3px">192.168.123.51</div>
<div class="a t" style="left:921px;top:809.0px">gos-qa-</div>
<div class="a t" style="left:921px;top:824.4px;letter-spacing:0.37px">debian.support.greenbone.net</div>
<div class="a t" style="left:1152px;top:816.3px">general/tcp</div>
<div class="a t" style="left:1283px;top:816.3px;letter-spacing:0.38px">Thu, Apr 8, 2021 7:32 AM UTC</div>
<div class="a" style="left:1258px;top:848px;width:180px;height:20px;border:1px solid #d0d0d0;border-bottom:none"></div>
<div class="a" style="left:1266px;top:853.5px;font-size:12px;line-height:14px;color:#111;letter-spacing:0.5px">Apply to page contents</div>
<div class="a" style="left:1417px;top:854px;width:9px;height:2px;background:#ccc"></div>
<svg width="50" height="10" viewBox="0 0 50 10" style="left:1440px;top:849px"><path d="M3.5 9 V3.5 H8.5 L11.5 6.5 V9" fill="none" stroke="#111" stroke-width="1.4"/><path d="M24 9 H30 M32 9 L37 4.5 M34.5 4 H37.5 V7" fill="none" stroke="#111" stroke-width="1.8"/></svg>

<div class="a" style="left:1173.5px;top:841px;font-size:11px;line-height:14px;color:#7a7a7a;letter-spacing:0.25px">Copyright &#169; 2009-2024 by Greenbone AG, www.greenbone.net</div>
</body></html>
